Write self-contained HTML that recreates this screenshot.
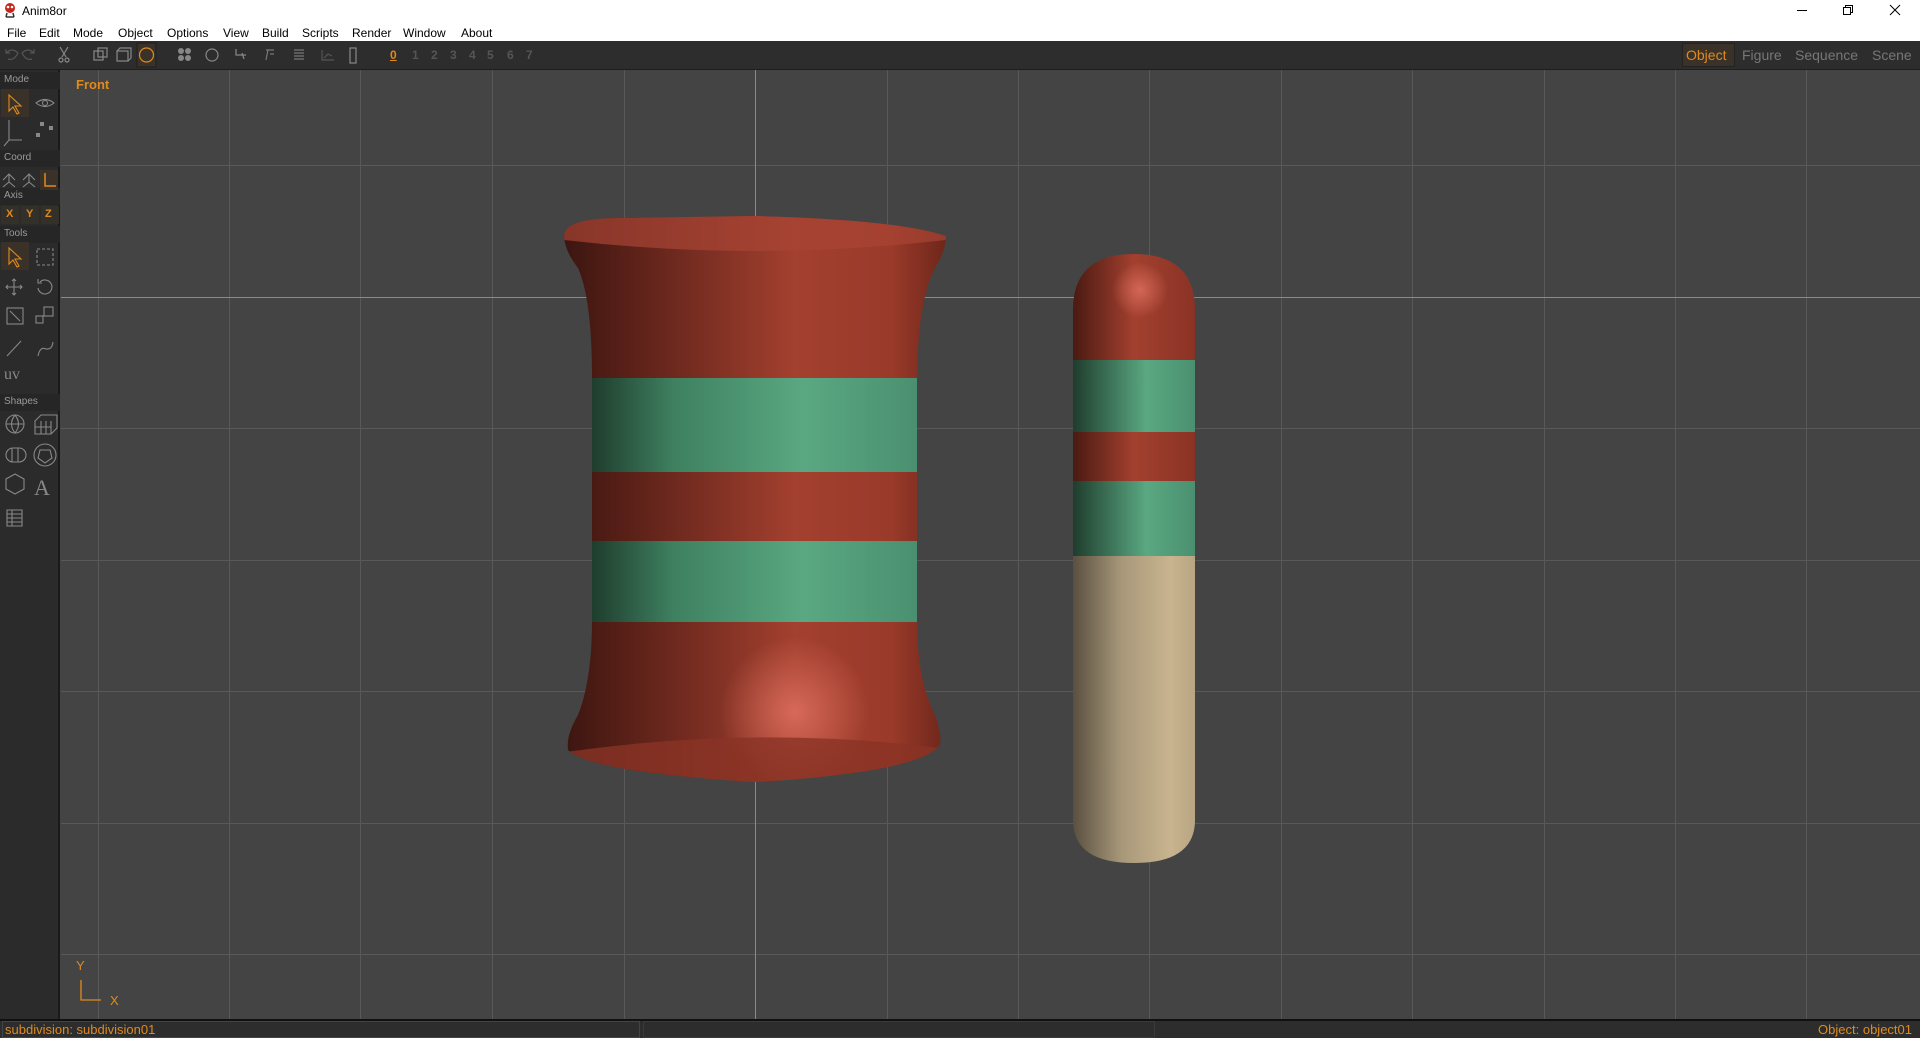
<!DOCTYPE html>
<html><head><meta charset="utf-8"><style>
*{margin:0;padding:0;box-sizing:border-box}
body{width:1920px;height:1038px;overflow:hidden;background:#444;font-family:"Liberation Sans",sans-serif;position:relative}
.abs{position:absolute}
#title{left:0;top:0;width:1920px;height:22px;background:#fff;font-size:12px;color:#000}
#menu{left:0;top:22px;width:1920px;height:19px;background:#fff;font-size:12px;color:#000}
#menu span{position:absolute;top:4px}
#tb{left:0;top:41px;width:1920px;height:29px;background:#2d2d2d;border-bottom:1px solid #1e1e1e}
.num{position:absolute;top:7px;font-size:12px;font-weight:bold;color:#555}
.tab{position:absolute;top:6px;font-size:14px;color:#777}
#left{left:0;top:70px;width:60px;height:950px;background:#2b2b2b;border-right:2px solid #1a1a1a}
.hdr{position:absolute;left:0;width:60px;height:17px;background:#262626;color:#9a9a9a;font-size:10px;padding:2px 0 0 4px}
#status{left:0;top:1019px;width:1920px;height:19px;background:#2d2d2d;border-top:2px solid #111;font-size:13px;color:#e08a1e}
.or{color:#e08a1e}
</style></head><body>
<div id="title" class="abs">
<svg class="abs" style="left:3px;top:2px" width="14" height="16"><circle cx="7" cy="6" r="5" fill="#c8261c"/><circle cx="5" cy="5" r="1.3" fill="#fff"/><circle cx="9" cy="5" r="1.3" fill="#fff"/><path d="M4 11 L3 15 M10 11 L11 15 M3 15 H11" stroke="#333" stroke-width="1.5"/></svg>
<span class="abs" style="left:22px;top:4px">Anim8or</span>
<svg class="abs" style="left:1797px;top:4px" width="120" height="14" stroke="#000" stroke-width="1" fill="none"><path d="M0 6.5 H10"/><rect x="46.5" y="3.5" width="7" height="7"/><path d="M48.5 3.5 V1.5 H55.5 V8.5 H53.5"/><path d="M93 1 L103 11 M103 1 L93 11"/></svg>
</div>
<div id="menu" class="abs">
<span style="left:7px">File</span><span style="left:39px">Edit</span><span style="left:73px">Mode</span><span style="left:118px">Object</span><span style="left:167px">Options</span><span style="left:223px">View</span><span style="left:262px">Build</span><span style="left:302px">Scripts</span><span style="left:352px">Render</span><span style="left:403px">Window</span><span style="left:461px">About</span>
</div>
<div id="tb" class="abs">
<svg class="abs" style="left:0;top:0" width="380" height="29" fill="none" stroke="#555" stroke-width="1.2">
<path d="M6 12 Q12 6 18 12 Q14 20 8 18 M6 8 V12 H10"/>
<path d="M34 12 Q28 6 22 12 Q26 20 32 18 M34 8 V12 H30"/>
<path d="M60 6 L66 16 M68 6 L62 16" stroke="#888"/><circle cx="61" cy="19" r="2" stroke="#888"/><circle cx="67" cy="19" r="2" stroke="#888"/>
<rect x="94" y="10" width="9" height="9" stroke="#888"/><rect x="98" y="7" width="9" height="9" stroke="#888"/>
<rect x="117" y="10" width="11" height="10" stroke="#888"/><path d="M117 10 L120 7 H131 V17 L128 20" stroke="#888"/>
<rect x="137" y="2" width="19" height="24" fill="#3a3228" stroke="#222"/><circle cx="146.5" cy="14" r="7" stroke="#e08a1e"/>
<g fill="#888" stroke="none"><circle cx="181" cy="10" r="3"/><circle cx="188" cy="10" r="3"/><circle cx="181" cy="17" r="3"/><circle cx="188" cy="17" r="3"/></g>
<circle cx="212" cy="14" r="6" stroke="#888"/>
<path d="M236 8 V14 H246 M242 12 L244 18" stroke="#888"/>
<path d="M266 9 H274 M268 9 L266 19 M270 13 H274" stroke="#777"/>
<path d="M294 9 H304 M294 12 H304 M294 15 H304 M294 18 H304" stroke="#777"/>
<path d="M322 9 V19 H334 M324 17 L328 13 L332 15" stroke="#555"/>
<rect x="350" y="7" width="6" height="15" stroke="#888"/>
<rect x="384" y="2" width="20" height="24" fill="#3a3228" stroke="#222"/>
</svg>
<span class="num or" style="left:390px;text-decoration:underline">0</span>
<span class="num" style="left:412px">1</span><span class="num" style="left:431px">2</span><span class="num" style="left:450px">3</span><span class="num" style="left:469px">4</span><span class="num" style="left:487px">5</span><span class="num" style="left:507px">6</span><span class="num" style="left:526px">7</span>
<div class="abs" style="left:1682px;top:2px;width:53px;height:24px;background:#3a3228;border:1px solid #222"></div>
<span class="tab or" style="left:1686px">Object</span><span class="tab" style="left:1742px">Figure</span><span class="tab" style="left:1795px">Sequence</span><span class="tab" style="left:1872px">Scene</span>
</div>

<svg class="abs" style="left:61px;top:70px" width="1859" height="949">
<g stroke="#595959" stroke-width="1">
<path d="M37.5 0V949M168.5 0V949M299.5 0V949M431.5 0V949M563.5 0V949M826.5 0V949M957.5 0V949M1088.5 0V949M1220.5 0V949M1351.5 0V949M1483.5 0V949M1614.5 0V949M1745.5 0V949"/>
<path d="M0 95.5H1859M0 358.5H1859M0 490.5H1859M0 621.5H1859M0 753.5H1859M0 884.5H1859"/>
</g>
<g stroke="#8a8a8a"><path d="M694.5 0V949M0 227.5H1859"/></g>
</svg>
<span class="abs or" style="left:76px;top:77px;font-size:13px;font-weight:bold">Front</span>

<svg class="abs" style="left:0;top:0" width="1920" height="1038">
<defs>
<linearGradient id="r1" x1="560" x2="950" gradientUnits="userSpaceOnUse"><stop offset="0" stop-color="#3a1510"/><stop offset=".2" stop-color="#5e2219"/><stop offset=".6" stop-color="#a3402f"/><stop offset=".85" stop-color="#9a3a2a"/><stop offset="1" stop-color="#6a2519"/></linearGradient>
<linearGradient id="g1" x1="592" x2="917" gradientUnits="userSpaceOnUse"><stop offset="0" stop-color="#1f3d2d"/><stop offset=".25" stop-color="#3e8060"/><stop offset=".65" stop-color="#5aa882"/><stop offset="1" stop-color="#4a9070"/></linearGradient>
<radialGradient id="hl" cx="795" cy="712" r="75" gradientUnits="userSpaceOnUse"><stop offset="0" stop-color="#e07060" stop-opacity=".85"/><stop offset="1" stop-color="#e07060" stop-opacity="0"/></radialGradient>
<radialGradient id="hl2" cx="1140" cy="290" r="28" gradientUnits="userSpaceOnUse"><stop offset="0" stop-color="#e07060" stop-opacity=".8"/><stop offset="1" stop-color="#e07060" stop-opacity="0"/></radialGradient>
<linearGradient id="r2" x1="1073" x2="1195" gradientUnits="userSpaceOnUse"><stop offset="0" stop-color="#4a1a12"/><stop offset=".5" stop-color="#a3402f"/><stop offset="1" stop-color="#8a3325"/></linearGradient>
<linearGradient id="g2" x1="1073" x2="1195" gradientUnits="userSpaceOnUse"><stop offset="0" stop-color="#1f3d2d"/><stop offset=".6" stop-color="#5aa882"/><stop offset="1" stop-color="#4a9070"/></linearGradient>
<linearGradient id="t2" x1="1073" x2="1195" gradientUnits="userSpaceOnUse"><stop offset="0" stop-color="#5a5040"/><stop offset=".4" stop-color="#a8987a"/><stop offset=".8" stop-color="#c8b48e"/><stop offset="1" stop-color="#b8a582"/></linearGradient>
<clipPath id="c1"><path d="M564,235 Q566,218 620,218 L755,216 Q900,220 946,236 Q946,250 935,268 Q918,300 917,378 L917,620 Q917,680 935,715 Q942,735 940,745 Q920,772 755,782 Q590,772 568,750 Q566,735 578,715 Q592,680 592,620 L592,378 Q592,300 578,268 Q564,250 564,235 Z"/></clipPath>
<clipPath id="c2"><path d="M1073,310 Q1073,254 1134,254 Q1195,254 1195,310 L1195,820 Q1195,863 1134,863 Q1073,863 1073,820 Z"/></clipPath>
</defs>
<g clip-path="url(#c1)">
<rect x="560" y="210" width="390" height="170" fill="url(#r1)"/>
<rect x="560" y="378" width="390" height="95" fill="url(#g1)"/>
<rect x="560" y="472" width="390" height="70" fill="url(#r1)"/>
<rect x="560" y="541" width="390" height="82" fill="url(#g1)"/>
<rect x="560" y="622" width="390" height="165" fill="url(#r1)"/>
<rect x="560" y="622" width="390" height="165" fill="url(#hl)"/>
<path d="M564,240 Q755,262 946,240 L946,215 L564,215Z" fill="#a84535" opacity=".7"/>
<path d="M566,752 Q755,725 940,748 L940,790 L566,790Z" fill="#8a3325" opacity=".8"/>
</g>
<g clip-path="url(#c2)">
<rect x="1070" y="250" width="130" height="111" fill="url(#r2)"/>
<rect x="1070" y="250" width="130" height="111" fill="url(#hl2)"/>
<rect x="1070" y="360" width="130" height="73" fill="url(#g2)"/>
<rect x="1070" y="432" width="130" height="50" fill="url(#r2)"/>
<rect x="1070" y="481" width="130" height="76" fill="url(#g2)"/>
<rect x="1070" y="556" width="130" height="310" fill="url(#t2)"/>
</g>
<g stroke="#e08a1e" fill="none" stroke-width="1.3"><path d="M81 980 V1000 H101"/></g>
<text x="76" y="970" fill="#e08a1e" font-size="13" font-family="Liberation Sans">Y</text>
<text x="110" y="1005" fill="#e08a1e" font-size="13" font-family="Liberation Sans">X</text>
</svg>

<div id="left" class="abs">
<div class="hdr" style="top:2px">Mode</div>
<div class="hdr" style="top:80px">Coord</div>
<div class="hdr" style="top:118px">Axis</div>
<div class="hdr" style="top:156px">Tools</div>
<div class="hdr" style="top:324px">Shapes</div>
<svg class="abs" style="left:0;top:0" width="60" height="330" fill="none" stroke="#888" stroke-width="1.1">
<rect x="1" y="19" width="28" height="28" fill="#3a3228" stroke="none"/>
<path d="M9 25 L9 41 L13 37 L17 44 L19 43 L15 36 L21 36 Z" stroke="#e08a1e"/>
<path d="M36 33 Q45 26 54 33 Q45 40 36 33Z"/><circle cx="45" cy="33" r="2.5"/>
<path d="M9 50 V70 H22 M9 70 L4 76"/>
<g fill="#888" stroke="none"><rect x="40" y="52" width="4" height="4"/><rect x="49" y="56" width="4" height="4"/><rect x="36" y="63" width="4" height="4"/></g>
<path d="M3 110 L9 104 L15 110 M9 104 V112 L3 117 M9 112 L15 117"/>
<path d="M23 110 L29 104 L35 110 M29 104 V112 L23 117 M29 112 L35 117"/>
<rect x="40" y="100" width="18" height="20" fill="#3a3228" stroke="none"/>
<path d="M45 103 V116 H56" stroke="#e08a1e" stroke-width="1.5"/>
<rect x="1" y="136" width="18" height="18" fill="#33302a" stroke="none"/><rect x="21" y="136" width="18" height="18" fill="#33302a" stroke="none"/><rect x="41" y="136" width="18" height="18" fill="#33302a" stroke="none"/>
<rect x="1" y="172" width="28" height="28" fill="#3a3228" stroke="none"/>
<path d="M9 178 L9 194 L13 190 L17 197 L19 196 L15 189 L21 189 Z" stroke="#e08a1e"/>
<rect x="37" y="179" width="16" height="16" stroke-dasharray="3 2"/>
<path d="M14 209 V225 M6 217 H22 M12 211 L14 209 L16 211 M12 223 L14 225 L16 223 M8 215 L6 217 L8 219 M20 215 L22 217 L20 219"/>
<path d="M40 212 A7 7 0 1 1 38 218 M38 209 V213 H42"/>
<rect x="7" y="238" width="16" height="16"/><path d="M10 241 L15 246 M20 251 L15 246"/>
<rect x="36" y="246" width="7" height="7"/><rect x="44" y="237" width="9" height="9"/><path d="M43 246 L44 246"/>
<path d="M7 286 L21 271"/><path d="M38 286 Q40 276 46 279 Q52 280 53 272"/>
</svg>
<span class="abs or" style="left:6px;top:138px;font-size:11px;font-weight:bold">X</span>
<span class="abs or" style="left:26px;top:138px;font-size:11px;font-weight:bold">Y</span>
<span class="abs or" style="left:45px;top:138px;font-size:11px;font-weight:bold">Z</span>
<span class="abs" style="left:4px;top:296px;font-size:16px;color:#888;font-family:'Liberation Serif',serif">uv</span>
<svg class="abs" style="left:0;top:340px" width="60" height="200" fill="none" stroke="#888" stroke-width="1.1">
<circle cx="15" cy="14" r="9"/><path d="M15 5 Q8 14 15 23 Q22 14 15 5 M6 14 H24"/>
<path d="M35 11 L41 5 H57 V18 L51 24 H35 Z M35 17 H51 M41 11 V24 M46 11 V24 M51 11 V24"/>
<rect x="6" y="38" width="20" height="14" rx="7"/><path d="M12 38 V52 M18 38 V52"/>
<circle cx="45" cy="45" r="11"/><path d="M40 40 L50 40 L52 48 L45 53 L38 48 Z"/>
<path d="M15 64 L24 69 V79 L15 84 L6 79 V69 Z"/>
<path d="M7 100 H22 V116 H7 Z M7 104 H22 M7 108 H22 M7 112 H22 M12 100 V116"/>
</svg>
<span class="abs" style="left:34px;top:405px;font-size:22px;color:#888;font-family:'Liberation Serif',serif">A</span>
</div>

<div id="status" class="abs">
<div class="abs" style="left:2px;top:0;width:638px;height:17px;border:1px solid #444"></div>
<div class="abs" style="left:643px;top:0;width:512px;height:17px;border:1px solid #3a3a3a"></div>
<span class="abs" style="left:5px;top:1px">subdivision: subdivision01</span>
<span class="abs" style="right:8px;top:1px">Object: object01</span>
</div>
</body></html>
